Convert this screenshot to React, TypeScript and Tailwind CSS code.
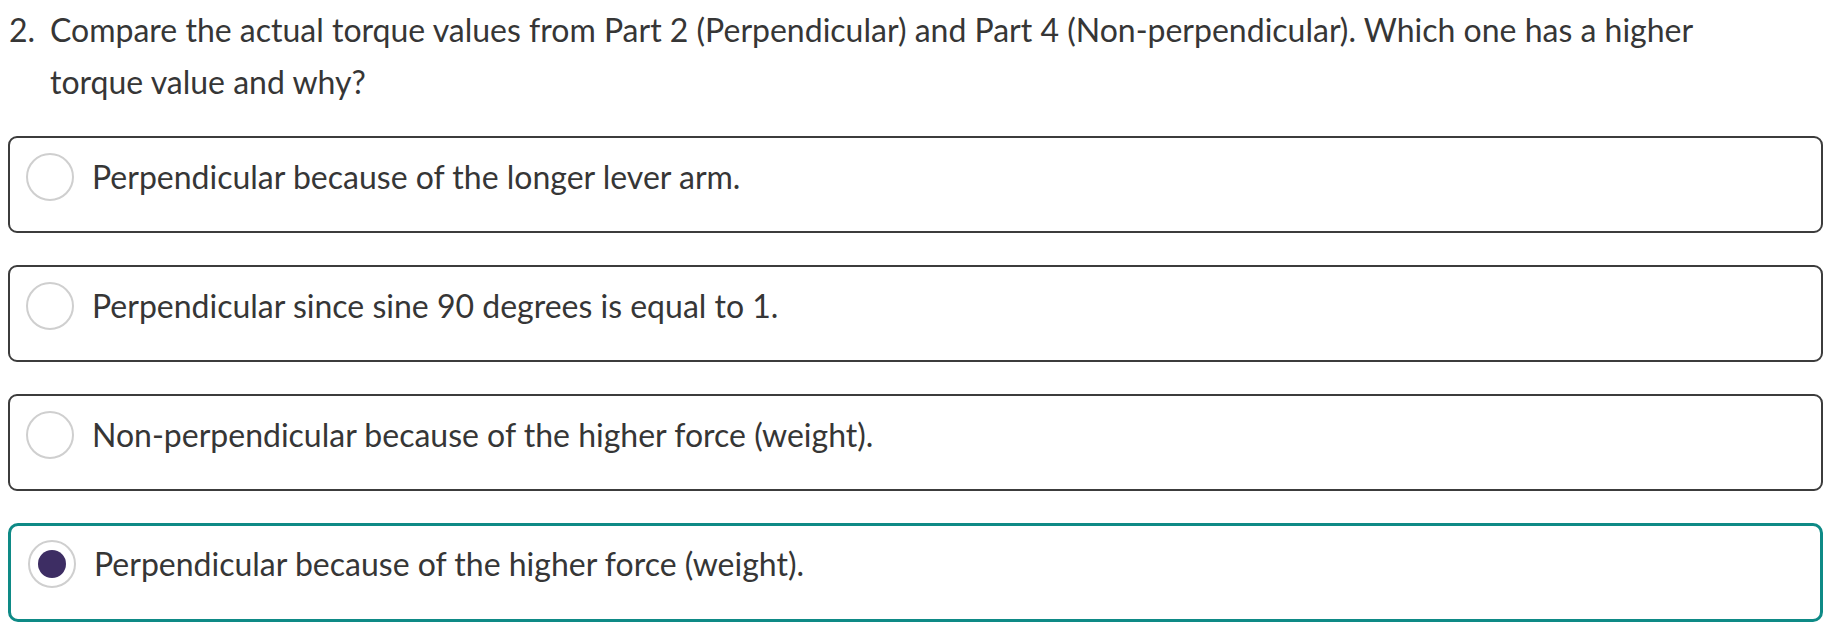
import React from "react";

const options = [
  { text: "Perpendicular because of the longer lever arm.", selected: false },
  { text: "Perpendicular since sine 90 degrees is equal to 1.", selected: false },
  { text: "Non-perpendicular because of the higher force (weight).", selected: false },
  { text: "Perpendicular because of the higher force (weight).", selected: true },
];

export default function App() {
  return (
    <div
      className="w-[1838px] h-[636px] bg-white text-[#363636] overflow-hidden"
      style={{ fontFamily: "Lato, 'Noto Sans', sans-serif" }}
    >
      <div className="pl-[8px] pr-[15px] pt-[4px]">
        <div className="flex text-[32px] leading-[52px]">
          <span className="w-[42px] shrink-0 pl-[1px]">2.</span>
          <p>
            Compare the actual torque values from Part 2 (Perpendicular) and Part 4 (Non-perpendicular). Which one has a higher
            <br />
            torque value and why?
          </p>
        </div>
        <div className="mt-[28px] flex flex-col gap-[32px]">
          {options.map((o, i) => (
            <div
              key={i}
              className={
                o.selected
                  ? "h-[99px] rounded-[10px] border-[3px] border-[#0e8a86] flex items-start pl-[17px] pt-[14px]"
                  : "h-[97px] rounded-[9px] border-2 border-[#3c3c3c] flex items-start pl-[16px] pt-[15px]"
              }
            >
              <span className="w-[48px] h-[48px] rounded-full border-2 border-[#cfcfcf] flex items-center justify-center shrink-0">
                {o.selected && <span className="w-[28px] h-[28px] rounded-full bg-[#3d2d63]" />}
              </span>
              <span className="ml-[18px] text-[32px] leading-[48px]">{o.text}</span>
            </div>
          ))}
        </div>
      </div>
    </div>
  );
}
